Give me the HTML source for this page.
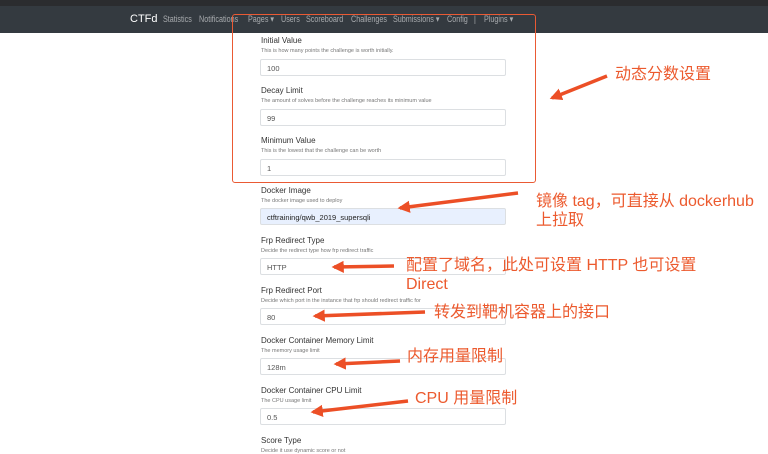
<!DOCTYPE html>
<html><head><meta charset="utf-8"><style>
body{margin:0;width:768px;height:451px;overflow:hidden;background:#fff;font-family:"Liberation Sans","Noto Sans CJK SC",sans-serif;position:relative}
.top{position:absolute;left:0;top:0;width:768px;height:6px;background:#2b2c2f}
.nav{position:absolute;left:0;top:6px;width:768px;height:27px;background:#343a40}
.nav span{position:absolute;top:8px;font-size:9px;color:#a8abae;white-space:nowrap;transform:scaleX(0.8);transform-origin:0 0}
.lab{position:absolute;left:261px;font-size:8px;color:#333}
.desc{position:absolute;left:261px;font-size:5.5px;color:#777}
.inp{position:absolute;left:260px;width:246px;height:17px;border:1px solid #dcdfe2;border-radius:2px;font-size:7.5px;color:#555;box-sizing:border-box;padding:4px 6px 0}
.ann{position:absolute;font-size:16px;color:#ec5a2e;white-space:nowrap;line-height:19px}
.box{position:absolute;left:232px;top:14px;width:302px;height:167px;border:1.5px solid #ea5a34;border-radius:3px}
</style></head><body>
<div class="top"></div>
<div class="nav">
<span style="left:130px;top:7px;font-size:11px;color:#fff;transform:none">CTFd</span>
<span style="left:163px">Statistics</span>
<span style="left:199px">Notifications</span>
<span style="left:248px">Pages ▾</span>
<span style="left:281px">Users</span>
<span style="left:306px">Scoreboard</span>
<span style="left:351px">Challenges</span>
<span style="left:393px">Submissions ▾</span>
<span style="left:447px">Config</span>
<span style="left:474px">|</span>
<span style="left:484px">Plugins ▾</span>
</div>
<div class="box"></div>
<div class="lab" style="top:36px">Initial Value</div><div class="desc" style="top:48px">This is how many points the challenge is worth initially.</div><div class="inp" style="top:59px">100</div>
<div class="lab" style="top:86px">Decay Limit</div><div class="desc" style="top:98px">The amount of solves before the challenge reaches its minimum value</div><div class="inp" style="top:109px">99</div>
<div class="lab" style="top:136px">Minimum Value</div><div class="desc" style="top:148px">This is the lowest that the challenge can be worth</div><div class="inp" style="top:159px">1</div>
<div class="lab" style="top:186px">Docker Image</div><div class="desc" style="top:198px">The docker image used to deploy</div><div class="inp" style="top:208px;background:#e8f0fe;color:#222">ctftraining/qwb_2019_supersqli</div>
<div class="lab" style="top:236px">Frp Redirect Type</div><div class="desc" style="top:248px">Decide the redirect type how frp redirect traffic</div><div class="inp" style="top:258px">HTTP</div>
<div class="lab" style="top:286px">Frp Redirect Port</div><div class="desc" style="top:298px">Decide which port in the instance that frp should redirect traffic for</div><div class="inp" style="top:308px">80</div>
<div class="lab" style="top:336px">Docker Container Memory Limit</div><div class="desc" style="top:348px">The memory usage limit</div><div class="inp" style="top:358px">128m</div>
<div class="lab" style="top:386px">Docker Container CPU Limit</div><div class="desc" style="top:398px">The CPU usage limit</div><div class="inp" style="top:408px">0.5</div>
<div class="lab" style="top:436px">Score Type</div><div class="desc" style="top:448px">Decide it use dynamic score or not</div>
<div class="ann" style="left:615px;top:65px">动态分数设置</div>
<div class="ann" style="left:536px;top:192px">镜像 tag，可直接从 dockerhub<br>上拉取</div>
<div class="ann" style="left:406px;top:256px">配置了域名，此处可设置 HTTP 也可设置<br>Direct</div>
<div class="ann" style="left:434px;top:303px">转发到靶机容器上的接口</div>
<div class="ann" style="left:407px;top:347px">内存用量限制</div>
<div class="ann" style="left:415px;top:389px">CPU 用量限制</div>
<svg width="768" height="451" style="position:absolute;left:0;top:0" fill="#ec4f26" stroke="#ec4f26">
<defs><marker id="a" viewBox="0 0 10 10" refX="8" refY="5" markerWidth="3.5" markerHeight="3.5" orient="auto"><path d="M0 0L10 5L0 10z" stroke="none"/></marker></defs>
<g stroke-width="3.5" fill="none" marker-end="url(#a)">
<path d="M607 76L552 98"/>
<path d="M518 193L400 208"/>
<path d="M394 266L334 267"/>
<path d="M425 312L315 316"/>
<path d="M400 361L336 364"/>
<path d="M408 401L313 412"/>
</g></svg>
</body></html>
